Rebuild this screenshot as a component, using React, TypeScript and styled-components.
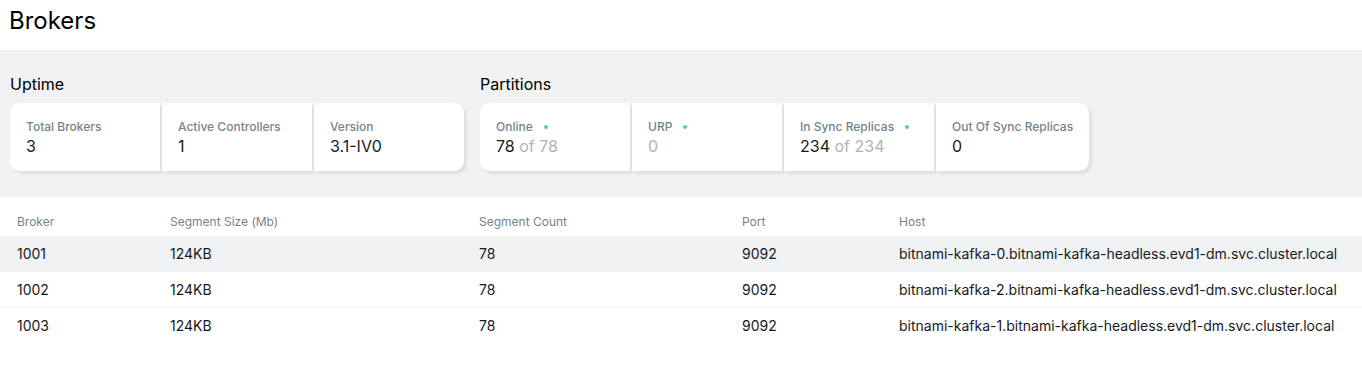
import React from "react";
import styled, { createGlobalStyle } from "styled-components";

const GlobalStyle = createGlobalStyle`
  html, body { margin: 0; padding: 0; background: #ffffff; }
  body { font-family: Inter, "Noto Sans", sans-serif; color: #171a1c; -webkit-font-smoothing: antialiased; }
  * { box-sizing: border-box; }
`;

const Page = styled.div`
  display: flex;
  flex-direction: column;
  width: 1362px;
`;

const Header = styled.div`
  height: 50px;
  padding: 5px 9px 0;
`;

const Title = styled.h1`
  margin: 0;
  font-size: 24px;
  line-height: 32px;
  font-weight: 400;
  color: #000000;
`;

const MetricsWrapper = styled.div`
  display: flex;
  gap: 16px;
  padding: 22px 10px 23px;
  background-color: #f1f2f3;
  margin-bottom: 8px;
`;

const Section = styled.div`
  display: flex;
  flex-direction: column;
`;

const SectionTitle = styled.h5`
  margin: 0 0 7px 0;
  font-size: 16px;
  line-height: 24px;
  font-weight: 400;
  color: #000000;
`;

const Indicators = styled.div`
  display: flex;
  gap: 2px;
`;

const Indicator = styled.div`
  height: 68px;
  min-width: 150px;
  padding: 14px 16px 0;
  display: flex;
  flex-direction: column;
  align-items: flex-start;
  background: #ffffff;
  box-shadow: 3px 3px 3px rgba(0, 0, 0, 0.08);
  margin-bottom: 3px;

  &:first-child {
    border-top-left-radius: 10px;
    border-bottom-left-radius: 10px;
  }
  &:last-child {
    border-top-right-radius: 10px;
    border-bottom-right-radius: 10px;
  }
`;

const IndicatorTitle = styled.div`
  display: flex;
  align-items: center;
  gap: 11px;
  font-size: 12px;
  line-height: 20px;
  font-weight: 500;
  color: #73848c;
  white-space: nowrap;
`;

const Dot = styled.span`
  width: 4px;
  height: 4px;
  border-radius: 50%;
  background: #5cd685;
  margin-top: -1px;
`;

const Value = styled.div<{ $muted?: boolean }>`
  font-size: 16px;
  line-height: 19px;
  font-weight: 400;
  color: ${({ $muted }) => ($muted ? "#abb5ba" : "#171a1c")};
`;

const Of = styled.span`
  color: #abb5ba;
`;

const Table = styled.table`
  width: 100%;
  border-collapse: collapse;
  table-layout: fixed;
`;

const Th = styled.th<{ $w?: number }>`
  width: ${({ $w }) => ($w ? `${$w}px` : "auto")};
  padding: 9px 0 7px 17px;
  text-align: left;
  font-size: 12px;
  line-height: 15px;
  font-weight: 400;
  color: #73848c;
`;

const Tr = styled.tr<{ $active?: boolean }>`
  background: ${({ $active }) => ($active ? "#f1f2f3" : "#ffffff")};
  border-bottom: 1px solid #f1f2f3;
  &:last-child { border-bottom: none; }
`;

const Td = styled.td`
  padding: 8px 0 8px 17px;
  font-size: 14px;
  line-height: 19px;
  font-weight: 400;
  color: #171a1c;
  white-space: nowrap;
`;

type Metric = { title: string; value: string; of?: string; dot?: boolean; muted?: boolean };

const uptime: Metric[] = [
  { title: "Total Brokers", value: "3" },
  { title: "Active Controllers", value: "1" },
  { title: "Version", value: "3.1-IV0" },
];

const partitions: Metric[] = [
  { title: "Online", value: "78", of: "of 78", dot: true },
  { title: "URP", value: "0", dot: true, muted: true },
  { title: "In Sync Replicas", value: "234", of: "of 234", dot: true },
  { title: "Out Of Sync Replicas", value: "0" },
];

const brokers = [
  { id: "1001", host: "bitnami-kafka-0.bitnami-kafka-headless.evd1-dm.svc.cluster.local" },
  { id: "1002", host: "bitnami-kafka-2.bitnami-kafka-headless.evd1-dm.svc.cluster.local" },
  { id: "1003", host: "bitnami-kafka-1.bitnami-kafka-headless.evd1-dm.svc.cluster.local" },
];

const MetricGroup = ({ title, items }: { title: string; items: Metric[] }) => (
  <Section>
    <SectionTitle>{title}</SectionTitle>
    <Indicators>
      {items.map((m) => (
        <Indicator key={m.title}>
          <IndicatorTitle>
            {m.title}
            {m.dot && <Dot />}
          </IndicatorTitle>
          <Value $muted={m.muted}>
            {m.value}
            {m.of && <Of> {m.of}</Of>}
          </Value>
        </Indicator>
      ))}
    </Indicators>
  </Section>
);

export default function App() {
  return (
    <>
      <GlobalStyle />
      <Page>
        <Header>
          <Title>Brokers</Title>
        </Header>
        <MetricsWrapper>
          <MetricGroup title="Uptime" items={uptime} />
          <MetricGroup title="Partitions" items={partitions} />
        </MetricsWrapper>
        <Table>
          <thead>
            <tr>
              <Th $w={153}>Broker</Th>
              <Th $w={309}>Segment Size (Mb)</Th>
              <Th $w={263}>Segment Count</Th>
              <Th $w={157}>Port</Th>
              <Th>Host</Th>
            </tr>
          </thead>
          <tbody>
            {brokers.map((b, i) => (
              <Tr key={b.id} $active={i === 0}>
                <Td>{b.id}</Td>
                <Td>124KB</Td>
                <Td>78</Td>
                <Td>9092</Td>
                <Td>{b.host}</Td>
              </Tr>
            ))}
          </tbody>
        </Table>
      </Page>
    </>
  );
}
